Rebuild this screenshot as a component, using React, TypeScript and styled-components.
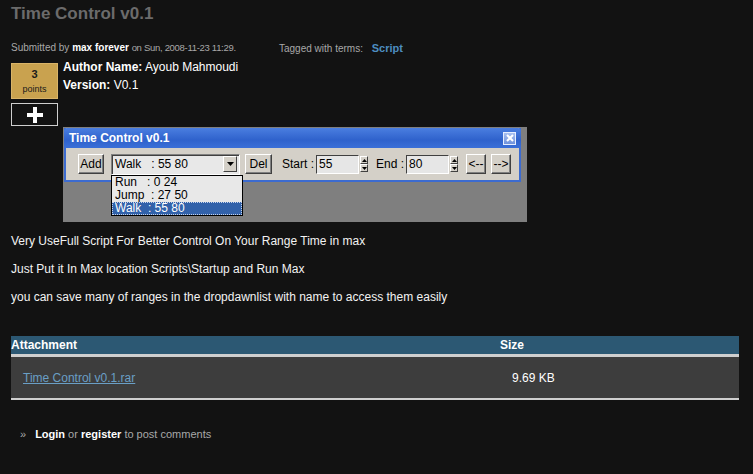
import React from "react"
import styled, { createGlobalStyle } from "styled-components"

const Global = createGlobalStyle`
  body {
    margin: 0;
    background: #121212;
    font-family: "Liberation Sans", Arial, sans-serif;
  }
`

const ranges = [
  { name: "Run", gap: 3, from: 0, to: 24 },
  { name: "Jump", gap: 2, from: 27, to: 50 },
  { name: "Walk", gap: 2, from: 55, to: 80 },
]

export default function App() {
  return (
    <>
      <Global />
      <Page>
        <Title>Time Control v0.1</Title>
        <Meta>
          <span>
            Submitted by <b>max forever</b> <Stamp>on Sun, 2008-11-23 11:29.</Stamp>
          </span>
          <span>
            Tagged with terms: <TermLink>Script</TermLink>
          </span>
        </Meta>

        <PostRow>
          <VoteColumn>
            <Points>
              <PointsNum>3</PointsNum>
              <PointsLabel>points</PointsLabel>
            </Points>
            <PlusBtn>
              <svg width="16" height="16" viewBox="0 0 16 16">
                <rect x="6" y="0" width="4" height="16" fill="#fff" />
                <rect x="0" y="6" width="16" height="4" fill="#fff" />
              </svg>
            </PlusBtn>
          </VoteColumn>
          <Content>
            <Line>
              <b>Author Name:</b> Ayoub Mahmoudi
            </Line>
            <Line>
              <b>Version:</b> V0.1
            </Line>
            <Shot>
              <Win>
                <TitleBar>
                  <span>Time Control v0.1</span>
                  <CloseBox>
                    <svg width="8" height="8" viewBox="0 0 8 8">
                      <path d="M1 1 L7 7 M7 1 L1 7" stroke="#fff" strokeWidth="2" />
                    </svg>
                  </CloseBox>
                </TitleBar>
                <WinBody>
                  <WinButton $w={26}>Add</WinButton>
                  <Combo>
                    <ComboText>Walk&nbsp;&nbsp; : 55 80</ComboText>
                    <ComboArrow>
                      <svg width="7" height="4" viewBox="0 0 7 4">
                        <path d="M0 0 H7 L3.5 4 Z" fill="#000" />
                      </svg>
                    </ComboArrow>
                    <DropList>
                      {ranges.map((r) => (
                        <DropItem key={r.name} $active={r.name === "Walk"}>
                          {r.name}
                          {"\u00a0".repeat(r.gap)}: {r.from} {r.to}
                        </DropItem>
                      ))}
                    </DropList>
                  </Combo>
                  <WinButton $w={27} $ml={5}>Del</WinButton>
                  <WinLabel $ml={10}>Start :</WinLabel>
                  <Spinner value="55" />
                  <WinLabel $ml={8}>End :</WinLabel>
                  <Spinner value="80" />
                  <WinButton $w={20} $ml={8}>&lt;--</WinButton>
                  <WinButton $w={20} $ml={5}>--&gt;</WinButton>
                </WinBody>
              </Win>
            </Shot>
          </Content>
        </PostRow>

        <Para>Very UseFull Script For Better Control On Your Range Time in max</Para>
        <Para>Just Put it In Max location Scripts\Startup and Run Max</Para>
        <Para>you can save many of ranges in the dropdawnlist with name to access them easily</Para>

        <Attach>
          <thead>
            <tr>
              <Th>Attachment</Th>
              <Th $w={239}>Size</Th>
            </tr>
          </thead>
          <tbody>
            <tr>
              <Td>
                <FileLink href="#">Time Control v0.1.rar</FileLink>
              </Td>
              <Td $pl={12}>9.69 KB</Td>
            </tr>
          </tbody>
        </Attach>

        <Links>
          <li>
            <b>Login</b> or <b>register</b> to post comments
          </li>
        </Links>
      </Page>
    </>
  )
}

const Spinner = ({ value }: { value: string }) => (
  <SpinWrap>
    <SpinInput>{value}</SpinInput>
    <SpinArrows>
      <SpinHalf>
        <svg width="5" height="3" viewBox="0 0 5 3">
          <path d="M0 3 H5 L2.5 0 Z" fill="#000" />
        </svg>
      </SpinHalf>
      <SpinHalf>
        <svg width="5" height="3" viewBox="0 0 5 3">
          <path d="M0 0 H5 L2.5 3 Z" fill="#000" />
        </svg>
      </SpinHalf>
    </SpinArrows>
  </SpinWrap>
)

const Page = styled.div`
  padding: 0 14px 0 11px;
  color: #fff;
`

const Title = styled.h1`
  margin: 0;
  padding-top: 3px;
  font-size: 17px;
  line-height: 22px;
  color: #6b6b6b;
  font-weight: bold;
`

const Meta = styled.div`
  display: grid;
  grid-template-columns: 268px auto;
  margin-top: 14px;
  font-size: 10px;
  line-height: 18px;
  color: #a8a8a8;
  white-space: nowrap;
  b {
    color: #fff;
  }
`

const Stamp = styled.span`
  font-size: 9.5px;
  letter-spacing: -0.3px;
`

const TermLink = styled.span`
  margin-left: 6px;
  color: #4d8dc0;
  font-weight: bold;
  font-size: 11px;
`

const PostRow = styled.div`
  display: flex;
  gap: 5px;
`

const VoteColumn = styled.div`
  display: flex;
  flex-direction: column;
  gap: 4px;
  margin-top: 5px;
  width: 47px;
`

const Points = styled.div`
  height: 36px;
  background: #c9a24f;
  border: 1px solid #d9b468;
  box-sizing: border-box;
  display: flex;
  flex-direction: column;
  align-items: center;
  justify-content: center;
  color: #1a1a1a;
`

const PointsNum = styled.div`
  font-size: 11px;
  font-weight: bold;
  line-height: 13px;
`

const PointsLabel = styled.div`
  font-size: 9px;
  line-height: 12px;
  margin-top: 2px;
`

const PlusBtn = styled.div`
  height: 23px;
  border: 1px solid #cfcfcf;
  box-sizing: border-box;
  display: flex;
  align-items: center;
  justify-content: center;
`

const Content = styled.div`
  display: flex;
  flex-direction: column;
  font-size: 12px;
`

const Line = styled.div`
  line-height: 18px;
  color: #fff;
`

const Shot = styled.div`
  margin-top: 33px;
  width: 464px;
  height: 95px;
  background: #7f7f7f;
  padding: 1px 0 0 1px;
  box-sizing: border-box;
`

const Win = styled.div`
  width: 457px;
  border: 2px solid #3c6bd0;
  border-top: none;
  box-sizing: border-box;
  background: #d4d0c8;
  position: relative;
`

const TitleBar = styled.div`
  height: 20px;
  margin: 0 -2px;
  padding: 0 5px;
  display: flex;
  align-items: center;
  justify-content: space-between;
  background: linear-gradient(#4a7ee0, #2f62cc 60%, #3a6fd8);
  color: #fff;
  font-weight: bold;
  font-size: 12px;
  border-radius: 3px 3px 0 0;
`

const CloseBox = styled.div`
  width: 11px;
  height: 11px;
  background: linear-gradient(#a8c0f0, #6f92dc);
  border: 1px solid #e6eeff;
  display: flex;
  align-items: center;
  justify-content: center;
`

const WinBody = styled.div`
  display: flex;
  align-items: center;
  height: 32px;
  padding-left: 12px;
  font-size: 11px;
  color: #000;
`

const WinButton = styled.div<{ $w: number; $ml?: number }>`
  width: ${(p) => p.$w}px;
  height: 20px;
  margin-left: ${(p) => p.$ml ?? 0}px;
  box-sizing: border-box;
  background: #d4d0c8;
  border: 1px solid;
  border-color: #fff #404040 #404040 #fff;
  box-shadow: inset -1px -1px 0 #808080;
  display: flex;
  align-items: center;
  justify-content: center;
  font-size: 12px;
`

const Combo = styled.div`
  position: relative;
  width: 129px;
  height: 21px;
  margin-left: 7px;
  box-sizing: border-box;
  background: #e8e8e8;
  border: 1px solid;
  border-color: #808080 #fff #fff #808080;
  box-shadow: inset 1px 1px 0 #404040;
  display: flex;
  align-items: center;
`

const ComboText = styled.div`
  flex: 1;
  padding-left: 3px;
  font-size: 12px;
  white-space: nowrap;
`

const ComboArrow = styled.div`
  width: 14px;
  height: 16px;
  margin-right: 2px;
  box-sizing: border-box;
  background: #d4d0c8;
  border: 1px solid;
  border-color: #fff #404040 #404040 #fff;
  display: flex;
  align-items: center;
  justify-content: center;
`

const DropList = styled.div`
  position: absolute;
  left: -1px;
  top: 20px;
  width: 130px;
  background: #e8e8e8;
  border: 1px solid #000;
  z-index: 2;
`

const DropItem = styled.div<{ $active?: boolean }>`
  height: 13px;
  line-height: 13px;
  padding-left: 3px;
  font-size: 12px;
  white-space: nowrap;
  color: ${(p) => (p.$active ? "#fff" : "#000")};
  background: ${(p) => (p.$active ? "#3262aa" : "transparent")};
  outline: ${(p) => (p.$active ? "1px dotted #c8d4ea" : "none")};
  outline-offset: -1px;
`

const WinLabel = styled.span<{ $ml: number }>`
  margin-left: ${(p) => p.$ml}px;
  margin-right: 2px;
  font-size: 12px;
  white-space: nowrap;
`

const SpinWrap = styled.div`
  display: flex;
  align-items: center;
  gap: 1px;
`

const SpinInput = styled.div`
  width: 43px;
  height: 19px;
  box-sizing: border-box;
  background: #e6e6e6;
  border: 1px solid;
  border-color: #404040 #fff #fff #404040;
  padding-left: 2px;
  font-size: 12px;
  line-height: 17px;
`

const SpinArrows = styled.div`
  display: flex;
  flex-direction: column;
  width: 8px;
`

const SpinHalf = styled.div`
  height: 8px;
  background: #d4d0c8;
  border: 1px solid;
  border-color: #fff #404040 #404040 #fff;
  box-sizing: border-box;
  display: flex;
  align-items: center;
  justify-content: center;
`

const Para = styled.p`
  margin: 0;
  margin-top: 12px;
  font-size: 12px;
  line-height: 16px;
  color: #f2f2f2;
  &:first-of-type {
    margin-top: 11px;
  }
`

const Attach = styled.table`
  width: 728px;
  margin-top: 31px;
  border-collapse: collapse;
  font-size: 12px;
  border-bottom: 2px solid #cfcfcf;
`

const Th = styled.th<{ $w?: number }>`
  width: ${(p) => (p.$w ? `${p.$w}px` : "auto")};
  height: 18px;
  padding: 0;
  text-align: left;
  background: #2c5873;
  color: #fff;
  font-weight: bold;
  border-bottom: 3px solid #cfcfcf;
`

const Td = styled.td<{ $pl?: number }>`
  height: 41px;
  padding: 0 0 0 ${(p) => p.$pl ?? 12}px;
  background: #3d3d3d;
  color: #fff;
`

const FileLink = styled.a`
  color: #6a9fc6;
  text-decoration: underline;
`

const Links = styled.ul`
  margin: 28px 0 0;
  padding-left: 22px;
  list-style: none;
  font-size: 11px;
  color: #a8a8a8;
  li::before {
    content: "»";
    margin-left: -13px;
    margin-right: 9px;
    color: #a8a8a8;
  }
  b {
    color: #fff;
  }
`
